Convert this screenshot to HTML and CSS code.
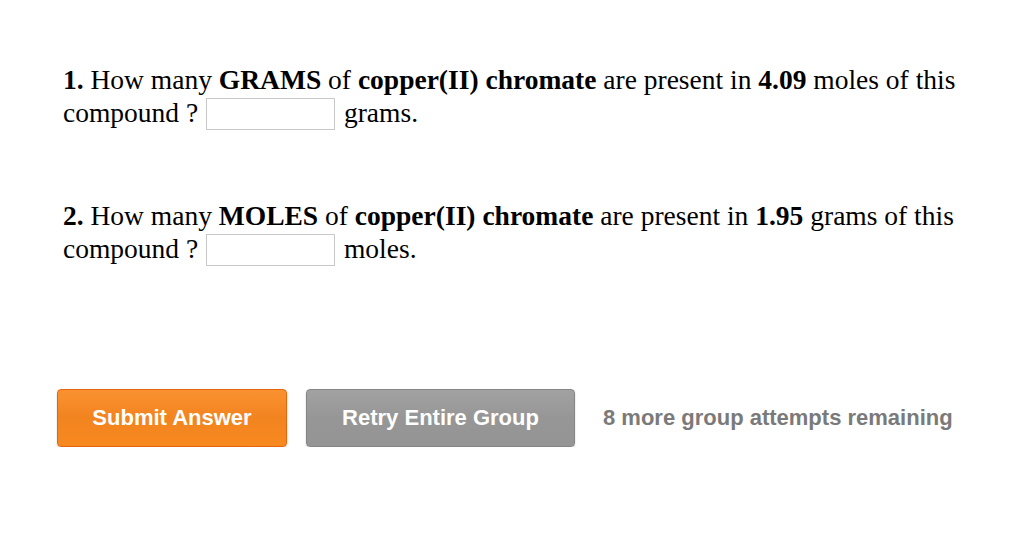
FILE: index.html
```html
<!DOCTYPE html>
<html lang="en">
<head>
    <meta charset="UTF-8">
    <title>Question Group</title>
    <link rel="stylesheet" href="styles.css">
</head>
<body>
    <div class="main-con">
        <div class="question">
            <b>1.</b> How many <b>GRAMS</b> of <b>copper(II) chromate</b> are present in <b>4.09</b> moles of this compound ? <input type="text" class="answer"> grams.
        </div>
        <div class="question">
            <b>2.</b> How many <b>MOLES</b> of <b>copper(II) chromate</b> are present in <b>1.95</b> grams of this compound ? <input type="text" class="answer"> moles.
        </div>
        <div class="actions">
            <button class="btn submit">Submit Answer</button>
            <button class="btn retry">Retry Entire Group</button>
            <span class="attempts">8 more group attempts remaining</span>
        </div>
    </div>
</body>
</html>
```

FILE: styles.css
```css
*{
    margin: 0;
    padding: 0;
    box-sizing: border-box;
}
body{
    background-color: #fff;
    font-family: "Liberation Serif", "Times New Roman", serif;
    color: #000;
}
.main-con{
    padding: 63px 40px 0 63px;
}
.question{
    font-size: 27.5px;
    line-height: 33px;
    margin-bottom: 69px;
    max-width: 910px;
}
.answer{
    width: 129px;
    height: 32px;
    border: 1px solid #c8c8c8;
    vertical-align: 3px;
    margin: 0 2px 0 1px;
    font-size: 16px;
}
.actions{
    display: flex;
    align-items: center;
    margin-top: 123px;
    margin-left: -6px;
}
.btn{
    height: 58px;
    border-radius: 4px;
    color: #fff;
    font-family: "Liberation Sans", Arial, sans-serif;
    font-weight: bold;
    font-size: 22px;
    cursor: pointer;
    box-shadow: 0 1px 2px rgba(0, 0, 0, 0.2);
}
.submit{
    width: 230px;
    background: linear-gradient(#fa9130, #f28420 50%, #f8891f);
    border: 1px solid #e5640c;
    margin-right: 19px;
}
.retry{
    width: 269px;
    background: linear-gradient(#a2a2a2, #969696 50%, #959595);
    border: 1px solid #858585;
    margin-right: 28px;
}
.attempts{
    font-family: "Liberation Sans", Arial, sans-serif;
    font-weight: bold;
    font-size: 22px;
    color: #7a7a7a;
}
```
